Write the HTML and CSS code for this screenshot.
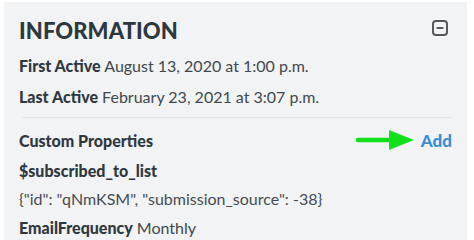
FILE: index.html
```html
<!DOCTYPE html>
<html>
<head>
  <title>Information</title>
  <link rel="stylesheet" href="styles.css">
</head>
<body>
  <div class="panel">
    <div class="panel-head">
      <h2>INFORMATION</h2>
      <button class="collapse" title="Collapse">
        <svg width="16" height="16" viewBox="0 0 16 16">
          <rect x="1" y="1" width="14" height="14" rx="3" fill="none" stroke="#55595d" stroke-width="2"/>
          <line x1="4.5" y1="8" x2="11.5" y2="8" stroke="#55595d" stroke-width="2"/>
        </svg>
      </button>
    </div>

    <div class="row"><b>First Active</b> August 13, 2020 at 1:00 p.m.</div>
    <div class="row"><b>Last Active</b> February 23, 2021 at 3:07 p.m.</div>

    <div class="divider"></div>

    <div class="props-head">
      <b>Custom Properties</b>
      <div class="add-wrap">
        <svg class="arrow" width="60" height="22" viewBox="0 0 60 22">
          <line x1="3" y1="11" x2="36" y2="11" stroke="#11e01a" stroke-width="4.5" stroke-linecap="round"/>
          <polygon points="34,1 59,11 34,21" fill="#11e01a"/>
        </svg>
        <a class="add" href="#">Add</a>
      </div>
    </div>

    <div class="prop-name">$subscribed_to_list</div>
    <div class="prop-value">{"id": "qNmKSM", "submission_source": -38}</div>
    <div class="row"><b>EmailFrequency</b> Monthly</div>
  </div>
</body>
</html>
```

FILE: styles.css
```css
body {
  margin: 0;
  background-color: #fff;
  font-family: Lato, "Liberation Sans", sans-serif;
  color: #41484d;
}

.panel {
  margin: 2px 7px 0 4px;
  background-color: #f2f3f5;
  padding: 15px 15px 20px 15px;
  height: 260px;
}

.panel-head {
  display: flex;
  justify-content: space-between;
  align-items: center;
  height: 28px;
}

h2 {
  margin: 0;
  font-size: 22px;
  line-height: 28px;
  font-weight: 900;
  color: #2c3840;
  letter-spacing: 0.1px;
}

.collapse {
  background: none;
  border: none;
  padding: 0;
  margin: 0 4px 6px 0;
  display: flex;
}

.row {
  font-size: 16px;
  line-height: 31px;
}

.panel-head + .row {
  margin-top: 5px;
}

.row b,
.props-head b,
.prop-name {
  font-weight: 900;
  color: #2f383e;
}

.divider {
  height: 1px;
  background-color: #e1e3e6;
  margin: 5px 0 0 3px;
  width: 430px;
}

.props-head {
  display: flex;
  justify-content: space-between;
  align-items: center;
  font-size: 16px;
  height: 22px;
  margin-top: 11px;
}

.add-wrap {
  display: flex;
  align-items: center;
  gap: 6px;
}

.add {
  color: #3a8fd0;
  font-weight: 900;
  font-size: 17px;
  text-decoration: none;
}

.prop-name {
  font-size: 16px;
  line-height: 29px;
  margin-top: 5px;
}

.prop-value {
  font-size: 16px;
  line-height: 28px;
  color: #464c51;
}

.prop-value + .row {
  line-height: 29px;
}
```
